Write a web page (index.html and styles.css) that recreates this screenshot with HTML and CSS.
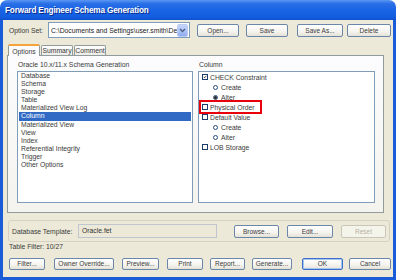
FILE: index.html
```html
<!DOCTYPE html>
<html>
<head>
<meta charset="utf-8">
<link rel="stylesheet" href="styles.css">
</head>
<body>
<div class="window">
  <div class="titlebar"><span class="title">Forward Engineer Schema Generation</span></div>
  <div class="frame">
    <div class="optrow">
      <span class="lbl">Option Set:</span>
      <div class="combo">
        <span class="combo-text">C:\Documents and Settings\user.smith\De</span>
        <span class="combo-btn"><svg width="7" height="5" viewBox="0 0 7 5"><path d="M1 1 L3.5 3.5 L6 1" fill="none" stroke="#fff" stroke-width="1.4"/></svg></span>
      </div>
      <button class="btn b-open">Open...</button>
      <button class="btn b-save">Save</button>
      <button class="btn b-saveas">Save As...</button>
      <button class="btn b-delete">Delete</button>
    </div>
    <div class="tabs">
      <div class="tab active">Options</div>
      <div class="tab">Summary</div>
      <div class="tab">Comment</div>
    </div>
    <div class="panel">
      <div class="pane">
        <div class="pane-lbl">Oracle 10.x/11.x Schema Generation</div>
        <div class="list">
          <div class="item">Database</div>
          <div class="item">Schema</div>
          <div class="item">Storage</div>
          <div class="item">Table</div>
          <div class="item">Materialized View Log</div>
          <div class="item sel">Column</div>
          <div class="item">Materialized View</div>
          <div class="item">View</div>
          <div class="item">Index</div>
          <div class="item">Referential Integrity</div>
          <div class="item">Trigger</div>
          <div class="item">Other Options</div>
        </div>
      </div>
      <div class="pane">
        <div class="pane-lbl">Column</div>
        <div class="list opts">
          <div class="opt"><span class="cb checked"><svg width="6" height="6" viewBox="0 0 6 6"><path d="M1 2.8 L2.4 4.3 L5 1.3" fill="none" stroke="#222" stroke-width="1.2"/></svg></span>CHECK Constraint</div>
          <div class="opt sub"><span class="rb"></span>Create</div>
          <div class="opt sub"><span class="rb on"></span>Alter</div>
          <div class="opt"><span class="hl"><span class="cb"></span>Physical Order</span></div>
          <div class="opt"><span class="cb"></span>Default Value</div>
          <div class="opt sub"><span class="rb"></span>Create</div>
          <div class="opt sub"><span class="rb"></span>Alter</div>
          <div class="opt"><span class="cb"></span>LOB Storage</div>
        </div>
      </div>
    </div>
    <div class="template">
      <span class="tlbl">Database Template:</span>
      <div class="field">Oracle.fet</div>
      <button class="btn b-browse">Browse...</button>
      <button class="btn b-edit">Edit...</button>
      <button class="btn b-reset" disabled>Reset</button>
    </div>
    <div class="filter">Table Filter: 10/27</div>
    <div class="bottom">
      <button class="btn b-filter">Filter...</button>
      <button class="btn b-owner">Owner Override...</button>
      <button class="btn b-preview">Preview...</button>
      <button class="btn b-print">Print</button>
      <button class="btn b-report">Report...</button>
      <button class="btn b-generate">Generate...</button>
      <button class="btn default b-ok">OK</button>
      <button class="btn b-cancel">Cancel</button>
    </div>
  </div>
</div>
</body>
</html>
```

FILE: styles.css
```css
* { box-sizing: border-box; }
html, body { margin: 0; padding: 0; background: #ffffff; }
body { width: 400px; height: 280px; overflow: hidden; font-family: "Liberation Sans", Arial, sans-serif; font-size: 6.8px; color: #3a3a3a; }

.window { width: 396px; height: 280px; display: flex; flex-direction: column; }

.titlebar {
  height: 20px;
  flex: none;
  border-radius: 7px 7px 0 0;
  background: linear-gradient(#5A98F2 0%, #2A6FE6 18%, #1963E6 50%, #135DDF 85%, #0E50CC 100%);
  display: flex;
  align-items: center;
  padding-left: 5px;
}
.title { color: #fff; font-weight: bold; font-size: 8.2px; text-shadow: 1px 1px 0 #0A2A8A; letter-spacing: -0.15px; }

.frame {
  flex: 1;
  background: #ECE9D8;
  border: 3px solid #1A5CD8;
  border-top: 0;
  display: flex;
  flex-direction: column;
}

.btn {
  font-family: "Liberation Sans", Arial, sans-serif;
  font-size: 6.5px;
  color: #3a3a3a;
  height: 13px;
  padding: 0;
  border: 1px solid #6A86A8;
  border-radius: 2px;
  background: linear-gradient(#FFFFFF 0%, #F4F3EE 60%, #E4E1D6 100%);
  flex: none;
  line-height: 11px;
  text-align: center;
}
.btn:disabled { color: #B5B2A6; border-color: #C9C7BA; background: #F5F4EA; }
.btn.default { border-color: #3C6FC8; box-shadow: inset 0 0 0 1px #A8C4F0; }

.optrow { display: flex; align-items: center; height: 16px; margin-top: 2px; padding-left: 6px; }
.lbl { width: 39px; flex: none; }
.combo {
  width: 142px; height: 16px; flex: none;
  border: 1px solid #7F9DB9; background: #fff;
  display: flex; align-items: center;
  padding-left: 2px;
}
.combo-text { flex: 1; white-space: nowrap; color: #222; }
.combo-btn {
  width: 11px; height: 13px; flex: none; margin-right: 1px;
  border-radius: 2px;
  background: linear-gradient(#C6D6FB, #A9C1F5 60%, #8EABEE);
  border: 1px solid #B9CBF3;
  display: flex; align-items: center; justify-content: center;
}
.combo-btn svg path { stroke: #4D6185; }
.b-open { width: 42px; margin-left: 7px; }
.b-save { width: 42px; margin-left: 7px; }
.b-saveas { width: 46px; margin-left: 9px; }
.b-delete { width: 44px; margin-left: 4px; }

.tabs { display: flex; align-items: flex-end; height: 12px; margin-top: 5px; margin-left: 5px; }
.tab {
  height: 10px; line-height: 9px;
  padding: 0;
  border: 1px solid #919B9C; border-bottom: 0;
  border-radius: 2px 2px 0 0;
  background: linear-gradient(#FFFFFF, #ECEBE6);
  margin-left: 1px;
  width: 32px; text-align: center;
  white-space: nowrap;
}
.tab.active {
  height: 12px; line-height: 11px;
  border-top: 2px solid #F3A43A;
  background: #FCFCFE;
  position: relative; top: 1px; margin-left: 0;
}

.panel {
  margin-left: 4px;
  width: 377px; height: 158px; flex: none;
  border: 1px solid #919B9C;
  background: linear-gradient(#FCFCFE, #F4F3EE);
  display: flex;
  gap: 5px;
  padding: 4px 7px 0 9px;
}
.pane { display: flex; flex-direction: column; }
.pane:first-child { width: 176px; }
.pane:last-child { width: 177px; }
.pane-lbl { height: 11px; line-height: 10px; padding-left: 1px; }
.list { height: 132px; border: 1px solid #7F9DB9; background: #fff; padding: 0 1px; }
.item { line-height: 8.1px; height: 8.1px; padding-left: 2px; white-space: nowrap; }
.item.sel { background: #316AC5; color: #fff; }

.opts { padding: 0 0 0 3px; }
.opt { height: 10px; display: flex; align-items: center; white-space: nowrap; }
.opt.sub { padding-left: 11px; }
.cb {
  width: 6px; height: 6px; flex: none;
  border: 1px solid #1C3D6B; background: #fff; margin-right: 2px;
  display: flex; align-items: center; justify-content: center;
}
.cb svg { display: block; }
.rb {
  width: 5px; height: 5px; flex: none;
  border: 1px solid #2A4C7C; border-radius: 50%; background: #fff; margin-right: 3px;
  display: flex; align-items: center; justify-content: center;
}
.rb.on::after { content: ""; width: 3px; height: 3px; border-radius: 50%; background: #222; }
.hl { display: flex; align-items: center; outline: 2px solid #E8000B; padding: 1px 5px 1px 1px; margin-left: -1px; height: 10px; }

.template {
  margin-top: 7px; margin-left: 5px;
  width: 382px; height: 22px; flex: none;
  border: 1px solid #D5D2C2; border-radius: 3px;
  display: flex; align-items: center;
  padding-left: 3px;
}
.tlbl { width: 66px; flex: none; }
.field {
  width: 139px; height: 14px; flex: none;
  border: 1px solid #BFC6CF; background: #ECE9D8;
  padding-left: 3px; line-height: 12px; color: #333;
}
.b-browse { width: 45px; margin-left: 17px; }
.b-edit { width: 46px; margin-left: 8px; }
.b-reset { width: 45px; margin-left: 8px; }

.filter { height: 8px; line-height: 8px; margin-top: 1px; padding-left: 6px; }

.bottom { display: flex; margin-top: 7px; padding-left: 6px; }
.bottom .btn { height: 12px; line-height: 10px; }
.b-filter { width: 36px; }
.b-owner { width: 60px; margin-left: 9px; }
.b-preview { width: 37px; margin-left: 8px; }
.b-print { width: 36px; margin-left: 8px; }
.b-report { width: 35px; margin-left: 7px; }
.b-generate { width: 40px; margin-left: 7px; }
.b-ok { width: 41px; margin-left: 10px; }
.b-cancel { width: 42px; margin-left: 6px; }
```
